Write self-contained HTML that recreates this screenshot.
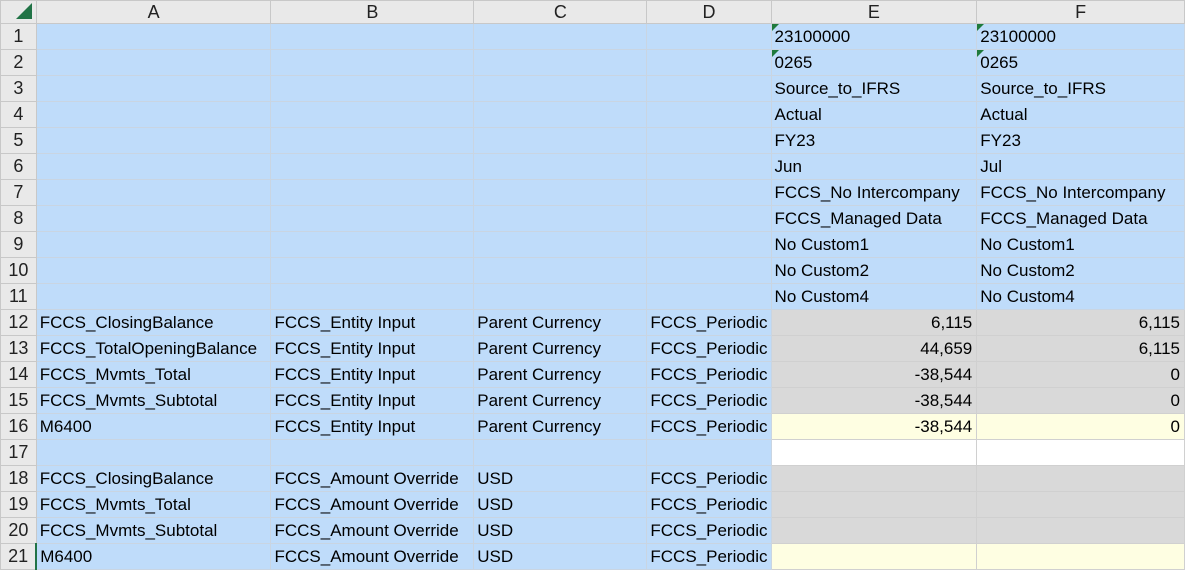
<html><head><style>
body{margin:0;background:#fff;}
table{border-collapse:collapse;table-layout:fixed;font-family:"Liberation Sans",Arial,sans-serif;font-size:17px;color:#000;}
td{height:25px;padding:0 3px;border:1px solid #d0d0d0;white-space:nowrap;overflow:hidden;position:relative;line-height:25px;}
tr.h td{height:22px;line-height:22px;background:#e9e9e9;text-align:center;color:#222;border-color:#c8c8c8;font-size:18px}
td.r{background:#e9e9e9;text-align:center;color:#222;border-color:#c8c8c8;padding:0;font-size:18px}
.b{background:#bfdcfa;border-color:#c9d5e2}
.g{background:#d9d9d9;text-align:right;padding-right:4px}
.y{background:#fefee2;text-align:right;padding-right:4px}
.w{background:#fff}
.t::before{content:"";position:absolute;left:0;top:0;border-top:7px solid #1e7a3c;border-right:7px solid transparent}
</style></head><body>
<table>
<colgroup><col style="width:36px"><col style="width:235px"><col style="width:203px"><col style="width:174px"><col style="width:123px"><col style="width:206px"><col style="width:208px"></colgroup>
<tr class="h"><td style="position:relative"><svg width="20" height="20" style="position:absolute;right:2px;bottom:2px"><polygon points="18,2 18,18 2,18" fill="#217346"/></svg></td><td>A</td><td>B</td><td>C</td><td>D</td><td>E</td><td>F</td></tr>
<tr><td class="r">1</td><td class="b"></td><td class="b"></td><td class="b"></td><td class="b"></td><td class="b t">23100000</td><td class="b t">23100000</td></tr>
<tr><td class="r">2</td><td class="b"></td><td class="b"></td><td class="b"></td><td class="b"></td><td class="b t">0265</td><td class="b t">0265</td></tr>
<tr><td class="r">3</td><td class="b"></td><td class="b"></td><td class="b"></td><td class="b"></td><td class="b">Source_to_IFRS</td><td class="b">Source_to_IFRS</td></tr>
<tr><td class="r">4</td><td class="b"></td><td class="b"></td><td class="b"></td><td class="b"></td><td class="b">Actual</td><td class="b">Actual</td></tr>
<tr><td class="r">5</td><td class="b"></td><td class="b"></td><td class="b"></td><td class="b"></td><td class="b">FY23</td><td class="b">FY23</td></tr>
<tr><td class="r">6</td><td class="b"></td><td class="b"></td><td class="b"></td><td class="b"></td><td class="b">Jun</td><td class="b">Jul</td></tr>
<tr><td class="r">7</td><td class="b"></td><td class="b"></td><td class="b"></td><td class="b"></td><td class="b">FCCS_No Intercompany</td><td class="b">FCCS_No Intercompany</td></tr>
<tr><td class="r">8</td><td class="b"></td><td class="b"></td><td class="b"></td><td class="b"></td><td class="b">FCCS_Managed Data</td><td class="b">FCCS_Managed Data</td></tr>
<tr><td class="r">9</td><td class="b"></td><td class="b"></td><td class="b"></td><td class="b"></td><td class="b">No Custom1</td><td class="b">No Custom1</td></tr>
<tr><td class="r">10</td><td class="b"></td><td class="b"></td><td class="b"></td><td class="b"></td><td class="b">No Custom2</td><td class="b">No Custom2</td></tr>
<tr><td class="r">11</td><td class="b"></td><td class="b"></td><td class="b"></td><td class="b"></td><td class="b">No Custom4</td><td class="b">No Custom4</td></tr>
<tr><td class="r">12</td><td class="b">FCCS_ClosingBalance</td><td class="b">FCCS_Entity Input</td><td class="b">Parent Currency</td><td class="b">FCCS_Periodic</td><td class="g">6,115</td><td class="g">6,115</td></tr>
<tr><td class="r">13</td><td class="b">FCCS_TotalOpeningBalance</td><td class="b">FCCS_Entity Input</td><td class="b">Parent Currency</td><td class="b">FCCS_Periodic</td><td class="g">44,659</td><td class="g">6,115</td></tr>
<tr><td class="r">14</td><td class="b">FCCS_Mvmts_Total</td><td class="b">FCCS_Entity Input</td><td class="b">Parent Currency</td><td class="b">FCCS_Periodic</td><td class="g">-38,544</td><td class="g">0</td></tr>
<tr><td class="r">15</td><td class="b">FCCS_Mvmts_Subtotal</td><td class="b">FCCS_Entity Input</td><td class="b">Parent Currency</td><td class="b">FCCS_Periodic</td><td class="g">-38,544</td><td class="g">0</td></tr>
<tr><td class="r">16</td><td class="b">M6400</td><td class="b">FCCS_Entity Input</td><td class="b">Parent Currency</td><td class="b">FCCS_Periodic</td><td class="y">-38,544</td><td class="y">0</td></tr>
<tr><td class="r">17</td><td class="b"></td><td class="b"></td><td class="b"></td><td class="b"></td><td class="w"></td><td class="w"></td></tr>
<tr><td class="r">18</td><td class="b">FCCS_ClosingBalance</td><td class="b">FCCS_Amount Override</td><td class="b">USD</td><td class="b">FCCS_Periodic</td><td class="g"></td><td class="g"></td></tr>
<tr><td class="r">19</td><td class="b">FCCS_Mvmts_Total</td><td class="b">FCCS_Amount Override</td><td class="b">USD</td><td class="b">FCCS_Periodic</td><td class="g"></td><td class="g"></td></tr>
<tr><td class="r">20</td><td class="b">FCCS_Mvmts_Subtotal</td><td class="b">FCCS_Amount Override</td><td class="b">USD</td><td class="b">FCCS_Periodic</td><td class="g"></td><td class="g"></td></tr>
<tr><td class="r" style="border-right:2px solid #217346">21</td><td class="b">M6400</td><td class="b">FCCS_Amount Override</td><td class="b">USD</td><td class="b">FCCS_Periodic</td><td class="y"></td><td class="y"></td></tr>
</table>
</body></html>
